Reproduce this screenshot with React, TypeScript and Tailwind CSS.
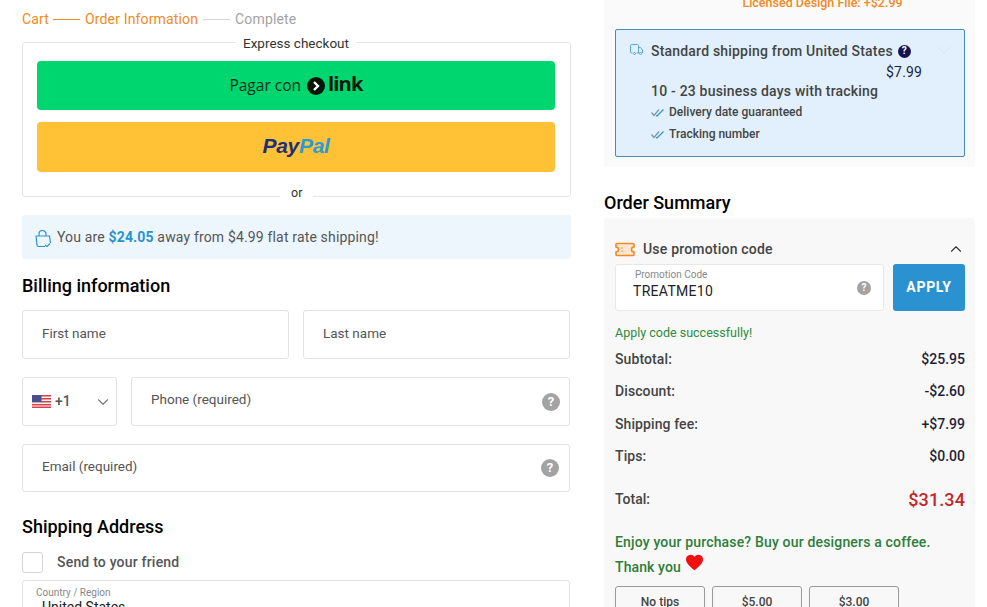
import React from 'react';
import { ChevronDown, ChevronUp } from 'lucide-react';

const HelpDot: React.FC<{ className?: string }> = ({ className }) => (
  <span className={`flex items-center justify-center rounded-full text-white font-bold ${className}`}>?</span>
);

const Field: React.FC<{ label: string; className?: string; labelClass?: string; children?: React.ReactNode }> = ({ label, className, labelClass = '-mt-[3px]', children }) => (
  <div className={`relative flex items-center justify-between h-[48px] pl-[19px] pr-[10px] border border-[#e3e3e3] rounded-[3px] bg-white ${className}`}>
    <span className={`text-[13.5px] text-[#555] ${labelClass}`}>{label}</span>
    {children}
  </div>
);

const SummaryRow: React.FC<{ label: string; value: string; className?: string }> = ({ label, value, className }) => (
  <div className={`flex items-center justify-between text-[14px] font-medium ${className}`}>
    <span className="text-[#444] tracking-[0.1px]">{label}</span>
    <span className="text-[#1f1f3d]">{value}</span>
  </div>
);

const UsFlag = () => (
  <svg width="19" height="13" viewBox="0 0 19 13" className="shrink-0">
    <rect width="19" height="13" fill="#f3f3f3" />
    <rect y="0" width="19" height="1.5" fill="#d8434b" />
    <rect y="3" width="19" height="1.5" fill="#d8434b" />
    <rect y="6" width="19" height="1.5" fill="#d8434b" />
    <rect y="9" width="19" height="1.5" fill="#d8434b" />
    <rect y="11.5" width="19" height="1.5" fill="#d8434b" />
    <rect width="9.500" height="7" fill="#46508f" />
  </svg>
);

const BagIcon = () => (
  <svg width="17" height="18" viewBox="0 0 17 18" fill="none" stroke="#2a92d1" strokeWidth="1.2" className="mr-[6px] mt-[3px] shrink-0">
    <path d="M5 6V4a3.500 3.500 0 0 1 7 0v2" />
    <path d="M1.500 6h14l1 7M2 6l1 9a1.500 1.500 0 0 0 1.500 1.500H11" />
    <path d="M11 15l2 1.500 3-3" />
  </svg>
);

const TicketIcon = () => (
  <svg width="20" height="15" viewBox="0 0 20 15" fill="#fde6cf" stroke="#f08a24" strokeWidth="1.6" className="shrink-0">
    <path d="M2 1.500h16a1 1 0 0 1 1 1v2.500a2.500 2.500 0 0 0 0 5v2.500a1 1 0 0 1-1 1H2a1 1 0 0 1-1-1V10a2.500 2.500 0 0 0 0-5V2.500a1 1 0 0 1 1-1z" />
    <path d="M7 5.500v1M7 8.500v1" />
  </svg>
);

const TruckIcon = () => (
  <svg width="13" height="11" viewBox="0 0 13 11" fill="none" stroke="#5aa8dc" strokeWidth="1" className="absolute left-[14px] top-[14px]">
    <path d="M2.500 9H1.500a1 1 0 0 1-1-1V1.500a1 1 0 0 1 1-1h6a1 1 0 0 1 1 1V9h-2" />
    <path d="M8.500 3.500h2l2 2.500v3h-1M8.500 9h1" />
    <circle cx="4.500" cy="9.500" r="1" />
    <circle cx="10.500" cy="9.500" r="1" />
  </svg>
);

const DoubleCheck = () => (
  <svg width="13" height="9" viewBox="0 0 13 9" fill="none" strokeWidth="1.2" className="mr-[5px] shrink-0">
    <path d="M0.500 4.500L3 7.500L8 1.500" stroke="#7a93a8" />
    <path d="M5 7.500L6 8L12.500 1.500" stroke="#2a92d1" />
  </svg>
);

export default function App() {
  return (
    <div className="h-[607px] w-[987px] overflow-hidden bg-white font-['Roboto',sans-serif] flex items-start pl-[22px]">
      {/* Left column */}
      <div className="w-[549px] shrink-0">
        <div className="flex items-center h-[18px] mt-[10px] text-[14px] tracking-[0.15px]">
          <span className="text-[#f08a24]">Cart</span>
          <span className="w-[27px] h-px bg-[#f08a24] ml-[4px] mr-[5px]" />
          <span className="text-[#f08a24]">Order Information</span>
          <span className="w-[27px] h-px bg-[#d5d5d5] mx-[5px]" />
          <span className="text-[#a3a3a3]">Complete</span>
        </div>

        <div className="relative mt-[14px] h-[155px] border border-[#e6e6e6] rounded-[3px] pl-[14px] pr-[15px] pt-[18px]">
          <span className="absolute -top-[8px] left-[213px] bg-white px-[7px] text-[13.5px] leading-[16px] text-[#333]">Express checkout</span>
          <div className="flex items-center justify-center h-[49px] rounded-[4px] bg-[#00d66f] text-[#0a2e1c] font-['Open_Sans',sans-serif]">
            <span className="text-[15.5px] font-medium mt-[1px]">Pagar con</span>
            <span className="ml-[6px] flex h-[18px] w-[18px] items-center justify-center rounded-full bg-[#04150c]">
              <svg width="10" height="10" viewBox="0 0 10 10" fill="none" stroke="#fff" strokeWidth="2.4"><path d="M3 1l4 4-4 4" /></svg>
            </span>
            <span className="ml-[3px] text-[20px] leading-none font-bold -mt-[3px] tracking-[-0.8px] text-[#04150c]">link</span>
          </div>
          <div className="flex items-center justify-center h-[50px] pb-[3px] mt-3 rounded-[4px] bg-[#ffc136] font-['Liberation_Sans',sans-serif] italic font-bold text-[21px] tracking-[-0.3px]">
            <span className="text-[#1e2e78]">Pay</span>
            <span className="text-[#2a9bd8]">Pal</span>
          </div>
          <span className="absolute -bottom-[5px] left-[257px] bg-white px-[11px] text-[12.500px] leading-[16px] text-[#333]">or</span>
        </div>

        <div className="flex items-center h-[44px] mt-[18px] pl-[12px] bg-[#edf6fd] rounded-[3px] text-[14px] text-[#555] tracking-[0.16px]">
          <BagIcon />
          <span>You are <b className="font-bold text-[#2a92d1]">$24.05</b> away from $4.99 flat rate shipping!</span>
        </div>

        <h2 className="mt-[15px] text-[18px] leading-[24px] font-medium text-black">Billing information</h2>

        <div className="flex gap-[14px] mt-[12px] pr-px">
          <Field label="First name" className="w-[267px] h-[49px]" />
          <Field label="Last name" className="w-[267px] h-[49px]" />
        </div>

        <div className="flex gap-[14px] mt-[18px] pr-px">
          <div className="flex items-center w-[95px] h-[49px] pl-[9px] pr-[4px] border border-[#e3e3e3] rounded-[3px]">
            <UsFlag />
            <span className="ml-[4px] text-[14px] font-medium text-[#555]">+1</span>
            <ChevronDown size={18} strokeWidth={1.5} className="ml-auto text-[#777]" />
          </div>
          <Field label="Phone (required)" labelClass="-mt-[5px]" className="flex-1 h-[49px]">
            <HelpDot className="h-[18px] w-[18px] bg-[#a3a3a3] text-[13px] mr-[-1px]" />
          </Field>
        </div>

        <Field label="Email (required)" className="mt-[18px] mr-px">
          <HelpDot className="h-[18px] w-[18px] bg-[#a3a3a3] text-[13px]" />
        </Field>

        <h2 className="mt-[23px] text-[18px] leading-[24px] font-medium text-black">Shipping Address</h2>

        <div className="flex items-center mt-[13px]">
          <span className="w-[21px] h-[21px] border border-[#d5d5d5] rounded-[3px]" />
          <span className="ml-[14px] text-[14px] font-medium text-[#555] tracking-[0.2px]">Send to your friend</span>
        </div>

        <div className="mt-[7px] mr-px h-[60px] border border-[#e3e3e3] rounded-[3px] pl-[13px] pt-[6px]">
          <div className="text-[10px] leading-[12px] text-[#888]">Country / Region</div>
          <div className="text-[14px] leading-[16px] text-[#222] pl-[6px]">United States</div>
        </div>
      </div>

      {/* Right column */}
      <div className="w-[371px] shrink-0 ml-[33px]">
        <div className="h-[167px] bg-[#fafafa] pt-[29px] px-[11px] relative">
          <div className="absolute -top-[5px] left-0 right-0 text-center text-[12.500px] leading-[16px] font-medium text-[#f08a24] pl-[66px]">Licensed Design File: +$2.99</div>
          <div className="relative h-[128px] w-[350px] border border-[#4a8db0] rounded-[2px] bg-[#e1f0fc] pl-[35px] pt-[12px]">
            <TruckIcon />
            <ChevronDown size={24} strokeWidth={1} className="absolute right-[8px] top-[8px] text-[#d6e6f2]" />
            <div className="flex items-center text-[14px] leading-[18px] font-medium text-[#444] tracking-[0.2px]">
              Standard shipping from United States
              <HelpDot className="ml-[5px] h-[13px] w-[13px] bg-[#14144f] text-[10px]" />
            </div>
            <div className="text-[14px] leading-[20px] mt-[2px] text-[#1f1f3d] pl-[235px] tracking-[0.2px]">$7.99</div>
            <div className="text-[14px] leading-[20px] -mt-[1px] font-medium text-[#444] tracking-[0.2px]">10 - 23 business days with tracking</div>
            <div className="flex items-center mt-[2px] text-[12px] leading-[18px] font-medium text-[#444]">
              <DoubleCheck />
              Delivery date guaranteed
            </div>
            <div className="flex items-center mt-[4px] text-[12px] leading-[18px] font-medium text-[#444]">
              <DoubleCheck />
              Tracking number
            </div>
          </div>
        </div>

        <h2 className="mt-[24px] text-[18px] leading-[24px] font-medium text-black">Order Summary</h2>

        <div className="mt-[3px] h-[400px] bg-[#f8f8f8] rounded-[3px] pl-[11px] pr-[10px] pt-[21px]">
          <div className="flex items-center h-[20px]">
            <TicketIcon />
            <span className="ml-[8px] text-[14px] font-medium text-[#444] tracking-[0.2px]">Use promotion code</span>
            <ChevronUp size={18} strokeWidth={1.5} className="ml-auto text-[#333]" />
          </div>
          <div className="flex mt-[5px]">
            <div className="flex items-center justify-between w-[269px] h-[47px] bg-white border border-[#e8e8e8] rounded-[3px] pl-[17px] pr-[12px]">
              <div className="-mt-[7px]">
                <div className="text-[10px] leading-[12px] text-[#888] pl-[2px]">Promotion Code</div>
                <div className="text-[14px] leading-[18px] text-[#222] mt-[1px] tracking-[0.3px]">TREATME10</div>
              </div>
              <HelpDot className="h-[14px] w-[14px] bg-[#a3a3a3] text-[10px]" />
            </div>
            <button className="ml-[9px] w-[72px] h-[47px] bg-[#2a92d1] rounded-[3px] text-white text-[14px] font-bold tracking-[0.7px]">APPLY</button>
          </div>
          <div className="mt-[14px] text-[12.500px] leading-[16px] text-[#2e8b3d]">Apply code successfully!</div>
          <SummaryRow label="Subtotal:" value="$25.95" className="mt-[9px] h-[18px]" />
          <SummaryRow label="Discount:" value="-$2.60" className="mt-[14px] h-[18px]" />
          <SummaryRow label="Shipping fee:" value="+$7.99" className="mt-[15px] h-[18px]" />
          <SummaryRow label="Tips:" value="$0.00" className="mt-[14px] h-[18px]" />
          <div className="flex items-center justify-between mt-[23px] h-[24px]">
            <span className="text-[14px] font-medium text-[#444] -mt-[1px]">Total:</span>
            <span className="text-[18px] font-medium text-[#c1272d] -mt-[2px] tracking-[0.1px]">$31.34</span>
          </div>
          <div className="mt-[21px] text-[14px] leading-[18px] font-medium text-[#2e7d3a] tracking-[0.17px]">Enjoy your purchase? Buy our designers a coffee.</div>
          <div className="relative mt-[7px] h-[18px] text-[14px] leading-[18px] font-medium text-[#2e7d3a] tracking-[0.1px]">
            Thank you
            <svg width="19" height="17" viewBox="0 0 24 22" className="absolute left-[70px] -top-[4px]">
              <path d="M12 21C5 15 1 11.5 1 7a6 6 0 0 1 11-3.3A6 6 0 0 1 23 7c0 4.500-4 8-11 14z" fill="#f01010" />
            </svg>
          </div>
          <div className="flex gap-[7px] mt-[10px]">
            <button className="w-[90px] h-[40px] border border-[#9a9a9a] rounded-[3px] text-[12px] font-medium text-[#444] pb-[10px] pt-[2px]">No tips</button>
            <button className="w-[90px] h-[40px] border border-[#9a9a9a] rounded-[3px] text-[12px] font-medium text-[#444] pb-[10px] pt-[2px]">$5.00</button>
            <button className="w-[90px] h-[40px] border border-[#9a9a9a] rounded-[3px] text-[12px] font-medium text-[#444] pb-[10px] pt-[2px]">$3.00</button>
          </div>
        </div>
      </div>
    </div>
  );
}
